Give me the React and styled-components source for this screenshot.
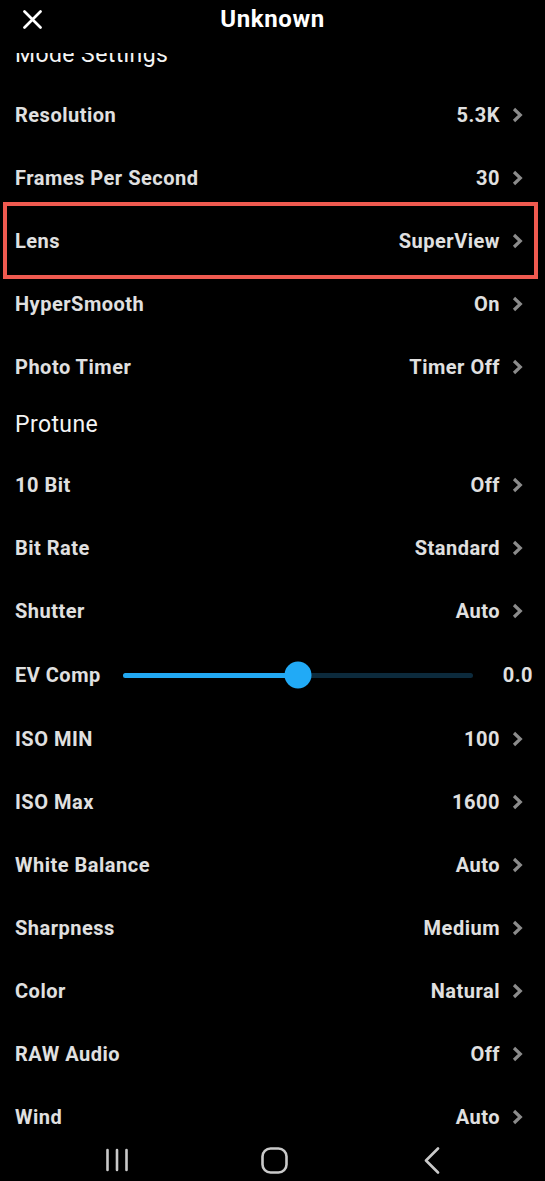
import React from "react";
import styled, { createGlobalStyle } from "styled-components";

const GlobalStyle = createGlobalStyle`
  html, body { margin: 0; padding: 0; background: #000; }
  body { font-family: Roboto, "Liberation Sans", Arial, sans-serif; -webkit-font-smoothing: antialiased; }
  * { box-sizing: border-box; }
`;

const Screen = styled.div`
  width: 100%;
  height: 1181px;
  background: #000;
  display: flex;
  flex-direction: column;
  overflow: hidden;
`;

const Header = styled.header`
  height: 53px;
  flex-shrink: 0;
  display: grid;
  grid-template-columns: 1fr auto 1fr;
  align-items: start;
  position: relative;
  z-index: 2;
  background: #000;
`;

const CloseButton = styled.button`
  justify-self: start;
  margin-left: 21px;
  width: 22px;
  height: 38px;
  padding: 0;
  border: 0;
  background: transparent;
  display: flex;
  align-items: center;
  justify-content: center;
  color: #fff;
`;

const Title = styled.h1`
  margin: 0;
  font-size: 24px;
  line-height: 38px;
  font-weight: 700;
  color: #fff;
  letter-spacing: 0.6px;
`;

const Viewport = styled.main`
  flex: 1;
  overflow: hidden;
`;

const List = styled.div`
  margin-top: -24.5px;
  display: flex;
  flex-direction: column;
`;

const Section = styled.div`
  height: 55px;
  padding: 11px 15px 0;
  font-size: 23px;
  line-height: 30px;
  font-weight: 400;
  color: #f4f4f4;
  letter-spacing: 0.4px;
`;

const Row = styled.div`
  position: relative;
  height: ${(p) => p.$height || 63}px;
  padding: 0 22px 0 15px;
  display: flex;
  align-items: center;
  justify-content: space-between;
  font-size: 20px;
  font-weight: 700;
  letter-spacing: 0.5px;
  color: #e0e0e0;

  ${(p) =>
    p.$highlight &&
    `
    &::after {
      content: "";
      position: absolute;
      top: -7.5px;
      bottom: -6.5px;
      left: 3px;
      right: 7px;
      border: 4px solid #ef5a50;
      pointer-events: none;
    }
  `}
`;

const Label = styled.span`
  white-space: nowrap;
`;

const ValueGroup = styled.span`
  display: flex;
  align-items: center;
  gap: 12px;
`;

const SliderRow = styled.div`
  height: 65px;
  padding: 0 12px 0 15px;
  display: grid;
  grid-template-columns: 108px 1fr 60px;
  align-items: center;
  font-size: 20px;
  font-weight: 700;
  letter-spacing: 0.5px;
  color: #e0e0e0;
`;

const SliderValue = styled.span`
  text-align: right;
`;

const Track = styled.div`
  position: relative;
  height: 5px;
  border-radius: 3px;
  background: #0c2a3c;
`;

const Fill = styled.div`
  position: absolute;
  left: 0;
  top: 0;
  bottom: 0;
  border-radius: 3px;
  background: #22a8f2;
`;

const Thumb = styled.div`
  position: absolute;
  top: 50%;
  width: 27px;
  height: 27px;
  border-radius: 50%;
  background: #21aaf6;
  transform: translate(-50%, -50%);
`;

const NavBar = styled.nav`
  height: 42px;
  flex-shrink: 0;
  display: grid;
  grid-template-columns: repeat(3, 1fr);
  align-items: center;
  justify-items: center;
  padding: 0 34px 0 38px;
  background: #000;
  color: #c9c9c9;
`;

const NavButton = styled.button`
  padding: 0;
  border: 0;
  background: transparent;
  color: inherit;
  display: flex;
  align-items: center;
  justify-content: center;
`;

const Chevron = () => (
  <svg width="11" height="16" viewBox="0 0 11 16" aria-hidden="true">
    <polyline points="2,2 8.3,8 2,14" fill="none" stroke="#8b8b8b" strokeWidth="3.2" />
  </svg>
);

const CloseIcon = () => (
  <svg width="19" height="19" viewBox="0 0 19 19" aria-hidden="true">
    <path d="M1.5 1.5 L17.5 17.5 M17.5 1.5 L1.5 17.5" stroke="#fff" strokeWidth="2.7" strokeLinecap="round" />
  </svg>
);

const RecentsIcon = () => (
  <svg width="24" height="24" viewBox="0 0 24 24" aria-hidden="true">
    <path d="M2.5 2 V22 M12 2 V22 M21.5 2 V22" stroke="currentColor" strokeWidth="2.6" strokeLinecap="round" />
  </svg>
);

const HomeIcon = () => (
  <svg width="27" height="27" viewBox="0 0 27 27" aria-hidden="true">
    <rect x="1.5" y="1.5" width="24" height="24" rx="8" fill="none" stroke="currentColor" strokeWidth="2.6" />
  </svg>
);

const BackIcon = () => (
  <svg width="16" height="27" viewBox="0 0 16 27" aria-hidden="true">
    <polyline points="14,1.5 2,13.5 14,25.5" fill="none" stroke="currentColor" strokeWidth="2.6" strokeLinecap="round" strokeLinejoin="round" />
  </svg>
);

const SettingRow = ({ label, value, highlight }) => (
  <Row $highlight={highlight}>
    <Label>{label}</Label>
    <ValueGroup>
      {value}
      <Chevron />
    </ValueGroup>
  </Row>
);

const modeSettings = [
  { label: "Resolution", value: "5.3K" },
  { label: "Frames Per Second", value: "30" },
  { label: "Lens", value: "SuperView", highlight: true },
  { label: "HyperSmooth", value: "On" },
  { label: "Photo Timer", value: "Timer Off" },
];

const protuneTop = [
  { label: "10 Bit", value: "Off" },
  { label: "Bit Rate", value: "Standard" },
  { label: "Shutter", value: "Auto" },
];

const protuneBottom = [
  { label: "ISO MIN", value: "100" },
  { label: "ISO Max", value: "1600" },
  { label: "White Balance", value: "Auto" },
  { label: "Sharpness", value: "Medium" },
  { label: "Color", value: "Natural" },
  { label: "RAW Audio", value: "Off" },
  { label: "Wind", value: "Auto" },
];

export default function App() {
  const ev = 0.5;
  return (
    <>
      <GlobalStyle />
      <Screen>
        <Header>
          <CloseButton aria-label="Close">
            <CloseIcon />
          </CloseButton>
          <Title>Unknown</Title>
          <span />
        </Header>
        <Viewport>
          <List>
            <Section>Mode Settings</Section>
            {modeSettings.map((s) => (
              <SettingRow key={s.label} {...s} />
            ))}
            <Section>Protune</Section>
            {protuneTop.map((s) => (
              <SettingRow key={s.label} {...s} />
            ))}
            <SliderRow>
              <Label>EV Comp</Label>
              <Track>
                <Fill style={{ width: `${ev * 100}%` }} />
                <Thumb style={{ left: `${ev * 100}%` }} />
              </Track>
              <SliderValue>0.0</SliderValue>
            </SliderRow>
            {protuneBottom.map((s) => (
              <SettingRow key={s.label} {...s} />
            ))}
          </List>
        </Viewport>
        <NavBar>
          <NavButton aria-label="Recent apps">
            <RecentsIcon />
          </NavButton>
          <NavButton aria-label="Home">
            <HomeIcon />
          </NavButton>
          <NavButton aria-label="Back">
            <BackIcon />
          </NavButton>
        </NavBar>
      </Screen>
    </>
  );
}
